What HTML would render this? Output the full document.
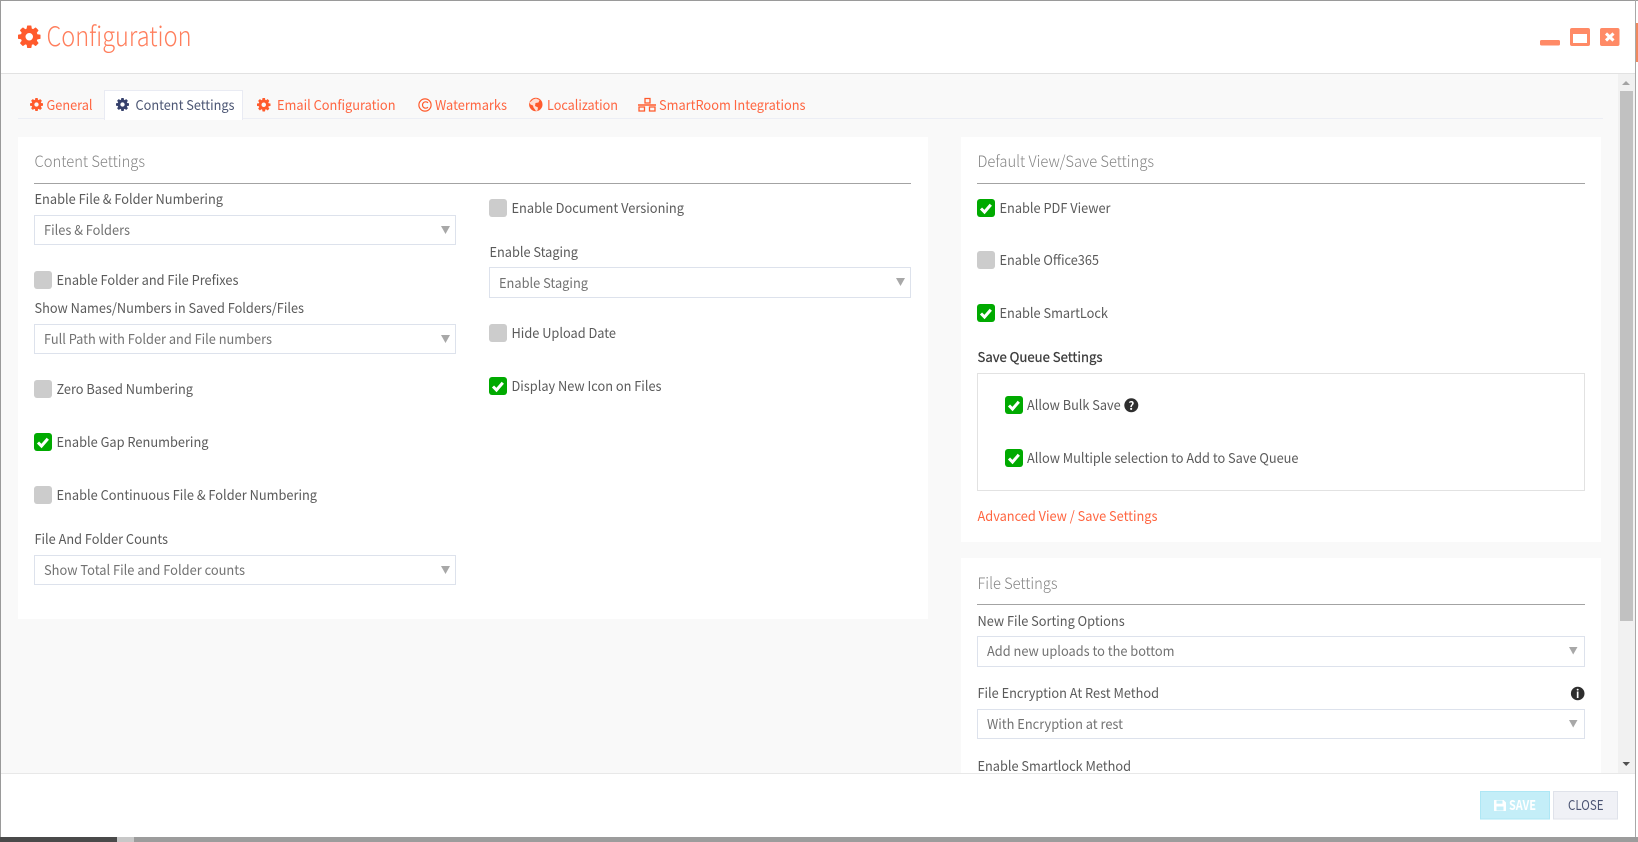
<!DOCTYPE html>
<html lang="en">
<head>
<meta charset="utf-8">
<title>Configuration</title>
<style>
html,body{margin:0;padding:0;background:#fff;width:1638px;height:842px;overflow:hidden}
svg{display:block}
text{font-family:"Noto Sans CJK SC","Liberation Sans",sans-serif;font-size:13.7px;fill:#5a5a5a}
.o{fill:#ff6540}
.t{font-size:13.7px}
.h{font-size:16px;fill:#858585;font-weight:300}
.s{fill:#727272}
.sel{fill:#fff;stroke:#dde2ec;stroke-width:1}
.arr{fill:#a8a8a8}
.on{fill:#00aa00}
.off{fill:#cccccc}
.ck{fill:none;stroke:#fff;stroke-width:3}
</style>
</head>
<body>
<svg width="1638" height="842" viewBox="0 0 1638 842" xmlns="http://www.w3.org/2000/svg">
<defs>
<symbol id="cog" viewBox="128 128 1536 1536"><path d="M1152 896q0-106-75-181t-181-75-181 75-75 181 75 181 181 75 181-75 75-181zm512-109v222q0 12-8 23t-20 13l-185 28q-19 54-39 91 35 50 107 138 10 12 10 25t-9 23q-27 37-99 108t-94 71q-12 0-26-9l-138-108q-44 23-91 38-16 136-29 186-7 28-36 28h-222q-14 0-24.5-8.5t-11.5-21.5l-28-184q-49-16-90-37l-141 107q-10 9-25 9-14 0-25-11-126-114-165-168-7-10-7-23 0-12 8-23 15-21 51-66.5t54-70.5q-27-50-41-99l-183-27q-13-2-21-12.5t-8-23.5v-222q0-12 8-23t19-13l186-28q14-46 39-92-40-57-107-138-10-12-10-24 0-10 9-23 26-36 98.5-107.5t94.5-71.5q13 0 26 10l138 107q44-23 91-38 16-136 29-186 7-28 36-28h222q14 0 24.5 8.5t11.5 21.5l28 184q49 16 90 37l142-107q9-9 24-9 13 0 25 10 129 119 165 170 7 8 7 22 0 12-8 23-15 21-51 66.5t-54 70.5q26 50 41 98l183 28q13 2 21 12.5t8 23.5z"/></symbol>
<g id="on"><rect x="0" y="0" width="18" height="18" rx="3" class="on"/><path d="M4 9.5L7.5 13L13.8 5.8" class="ck"/></g>
<g id="off"><rect x="0" y="0" width="18" height="18" rx="3" class="off"/></g>
</defs>

<!-- window -->
<rect x="0" y="0" width="1638" height="842" fill="#fff"/>
<rect x="1636" y="23" width="2" height="39" fill="#f0895f"/>
<rect x="1" y="74" width="1634" height="699" fill="#f9f9f9"/>
<rect x="1" y="73" width="1634" height="1" fill="#e2e2e2"/>
<rect x="1" y="773" width="1634" height="1" fill="#e8e8e8"/>
<rect x="1" y="774" width="1634" height="63" fill="#fff"/>
<rect x="0" y="0" width="1638" height="1" fill="#9a9a9a"/>
<rect x="0" y="0" width="1" height="837" fill="#9a9a9a"/>
<rect x="1635" y="0" width="1" height="837" fill="#a8a8a8"/>
<rect x="0" y="837" width="1638" height="5" fill="#9c9c9c"/>
<rect x="0" y="837" width="117" height="5" fill="#4a4a4a"/>
<rect x="117" y="837" width="17" height="5" fill="#c8c8c8"/>

<!-- title -->
<use href="#cog" x="18" y="25.5" width="22.5" height="22.5" fill="#ff5a2c"/>
<text x="46.5" y="46" style="font-size:27px;font-weight:300;fill:#ff7e5c" textLength="145" lengthAdjust="spacingAndGlyphs">Configuration</text>

<!-- window controls -->
<rect x="1540" y="40" width="20" height="5.5" rx="1.5" fill="#ff8a66"/>
<rect x="1570" y="28" width="20" height="18" rx="2" fill="#ff8a66"/>
<rect x="1573" y="34" width="14" height="9" fill="#fff"/>
<rect x="1600" y="28" width="19.5" height="18" rx="2" fill="#ff8a66"/>
<path d="M1606 33.5L1613.5 40.5M1613.5 33.5L1606 40.5" stroke="#fff" stroke-width="3" fill="none"/>

<!-- scrollbar -->
<rect x="1618" y="74" width="17" height="699" fill="#f1f1f1"/>
<rect x="1620" y="91" width="13" height="530" fill="#c1c1c1"/>
<polygon points="1626,81 1630,85 1622,85" fill="#a3a3a3"/>
<polygon points="1622.5,762 1630,762 1626.2,766" fill="#505050"/>

<!-- tabs -->
<rect x="18" y="118" width="1585" height="1" fill="#eceef5"/>
<rect x="104.5" y="90.5" width="138" height="29" fill="#fff" stroke="#e9ebf3" stroke-width="1"/>
<rect x="105" y="117" width="137" height="3" fill="#fff"/>

<use href="#cog" x="30" y="98" width="13" height="13" fill="#ff5a2c"/>
<text x="46.5" y="110" class="o" textLength="46" lengthAdjust="spacingAndGlyphs">General</text>
<use href="#cog" x="116" y="98" width="13" height="13" fill="#35406b"/>
<text x="135.5" y="110" style="fill:#4b5573" textLength="99" lengthAdjust="spacingAndGlyphs">Content Settings</text>
<use href="#cog" x="257" y="98" width="13.5" height="13.5" fill="#ff5a2c"/>
<text x="277" y="110" class="o" textLength="118.5" lengthAdjust="spacingAndGlyphs">Email Configuration</text>
<circle cx="425" cy="105" r="6.1" fill="none" stroke="#ff5a2c" stroke-width="1.2"/>
<path d="M428 102.8A3.2 3.2 0 1 0 428 107.2" fill="none" stroke="#ff5a2c" stroke-width="1.2"/>
<text x="435" y="110" class="o" textLength="72" lengthAdjust="spacingAndGlyphs">Watermarks</text>
<circle cx="535.8" cy="104.5" r="6.7" fill="#ff5a2c"/>
<path d="M533 99.5l3-1 3.5 1.5-1 2.5-3 .5-.5 3 3 1.5-.5 3-1.5.5-2.5-3.5-.5-2-2.5-1-1-2 2-1.5z" fill="#fff" opacity=".8"/>
<text x="547" y="110" class="o" textLength="71" lengthAdjust="spacingAndGlyphs">Localization</text>
<path d="M645 98.5h5v4.5h-5zM639 107h5.5v4h-5.5zM649.5 107h5.5v4h-5.5z" fill="none" stroke="#ff5a2c" stroke-width="1.3"/>
<path d="M638 105h18" stroke="#ff5a2c" stroke-width="1.4" fill="none"/>
<text x="659" y="110" class="o" textLength="146.5" lengthAdjust="spacingAndGlyphs">SmartRoom Integrations</text>

<!-- left panel -->
<rect x="18" y="137" width="910" height="482" fill="#fff"/>
<text x="34.5" y="167" class="h" textLength="110.5" lengthAdjust="spacingAndGlyphs">Content Settings</text>
<rect x="34" y="183" width="877" height="1" fill="#a3a3a3"/>

<text x="34.5" y="204" class="t" textLength="188.5" lengthAdjust="spacingAndGlyphs">Enable File &amp; Folder Numbering</text>
<rect x="34.5" y="215.5" width="421" height="29" class="sel"/>
<text x="44" y="235" class="s" textLength="86" lengthAdjust="spacingAndGlyphs">Files &amp; Folders</text>
<polygon points="441,226 450,226 445.5,234" class="arr"/>

<use href="#off" x="34" y="271"/>
<text x="56.5" y="285" class="t" textLength="182" lengthAdjust="spacingAndGlyphs">Enable Folder and File Prefixes</text>

<text x="34.5" y="313" class="t" textLength="269.5" lengthAdjust="spacingAndGlyphs">Show Names/Numbers in Saved Folders/Files</text>
<rect x="34.5" y="324.5" width="421" height="29" class="sel"/>
<text x="44" y="344" class="s" textLength="228" lengthAdjust="spacingAndGlyphs">Full Path with Folder and File numbers</text>
<polygon points="441,335 450,335 445.5,343" class="arr"/>

<use href="#off" x="34" y="380"/>
<text x="56.5" y="394" class="t" textLength="136.5" lengthAdjust="spacingAndGlyphs">Zero Based Numbering</text>

<use href="#on" x="34" y="433"/>
<text x="56.5" y="447" class="t" textLength="152" lengthAdjust="spacingAndGlyphs">Enable Gap Renumbering</text>

<use href="#off" x="34" y="486"/>
<text x="56.5" y="500" class="t" textLength="260.5" lengthAdjust="spacingAndGlyphs">Enable Continuous File &amp; Folder Numbering</text>

<text x="34.5" y="544" class="t" textLength="133.5" lengthAdjust="spacingAndGlyphs">File And Folder Counts</text>
<rect x="34.5" y="555.5" width="421" height="29" class="sel"/>
<text x="44" y="575" class="s" textLength="201" lengthAdjust="spacingAndGlyphs">Show Total File and Folder counts</text>
<polygon points="441,566 450,566 445.5,574" class="arr"/>

<!-- middle column -->
<use href="#off" x="489" y="199"/>
<text x="511.5" y="213" class="t" textLength="172.5" lengthAdjust="spacingAndGlyphs">Enable Document Versioning</text>
<text x="489.5" y="257" class="t" textLength="88.5" lengthAdjust="spacingAndGlyphs">Enable Staging</text>
<rect x="489.5" y="267.5" width="421" height="30" class="sel"/>
<text x="499" y="288" class="s" textLength="89" lengthAdjust="spacingAndGlyphs">Enable Staging</text>
<polygon points="896,278 905,278 900.5,286" class="arr"/>
<use href="#off" x="489" y="324"/>
<text x="511.5" y="338" class="t" textLength="104.5" lengthAdjust="spacingAndGlyphs">Hide Upload Date</text>
<use href="#on" x="489" y="377"/>
<text x="511.5" y="391" class="t" textLength="150" lengthAdjust="spacingAndGlyphs">Display New Icon on Files</text>

<!-- right panel 1 -->
<rect x="961" y="137" width="640" height="405" fill="#fff"/>
<text x="977.5" y="167" class="h" textLength="176.5" lengthAdjust="spacingAndGlyphs">Default View/Save Settings</text>
<rect x="977" y="183" width="608" height="1" fill="#a3a3a3"/>
<use href="#on" x="977" y="199"/>
<text x="999.5" y="213" class="t" textLength="111" lengthAdjust="spacingAndGlyphs">Enable PDF Viewer</text>
<use href="#off" x="977" y="251"/>
<text x="999.5" y="265" class="t" textLength="99.5" lengthAdjust="spacingAndGlyphs">Enable Office365</text>
<use href="#on" x="977" y="304"/>
<text x="999.5" y="318" class="t" textLength="108.5" lengthAdjust="spacingAndGlyphs">Enable SmartLock</text>
<text x="977.5" y="362" style="fill:#3a3a3a;stroke:#3a3a3a;stroke-width:.25" class="t" textLength="125" lengthAdjust="spacingAndGlyphs">Save Queue Settings</text>
<rect x="977.5" y="373.5" width="607" height="117" fill="#fff" stroke="#e2e2e2"/>
<use href="#on" x="1005" y="396"/>
<text x="1027" y="410" class="t" textLength="93.7" lengthAdjust="spacingAndGlyphs">Allow Bulk Save</text>
<circle cx="1131.3" cy="405.3" r="7" fill="#2e2e2e"/>
<text x="1131.3" y="410" text-anchor="middle" style="font-size:11.5px;font-weight:bold;fill:#fff">?</text>
<use href="#on" x="1005" y="449"/>
<text x="1027" y="463" class="t" textLength="271.5" lengthAdjust="spacingAndGlyphs">Allow Multiple selection to Add to Save Queue</text>
<text x="977.5" y="521" class="o" textLength="180" lengthAdjust="spacingAndGlyphs">Advanced View / Save Settings</text>

<!-- right panel 2 -->
<rect x="961" y="558" width="640" height="215" fill="#fff"/>
<text x="977.5" y="589" class="h" textLength="80" lengthAdjust="spacingAndGlyphs">File Settings</text>
<rect x="977" y="604" width="608" height="1" fill="#a3a3a3"/>
<text x="977.5" y="626" class="t" textLength="147.2" lengthAdjust="spacingAndGlyphs">New File Sorting Options</text>
<rect x="977.5" y="636.5" width="607" height="30" class="sel"/>
<text x="987" y="656" class="s" textLength="187.5" lengthAdjust="spacingAndGlyphs">Add new uploads to the bottom</text>
<polygon points="1569,647 1577.5,647 1573.2,654.5" class="arr"/>
<text x="977.5" y="698" class="t" textLength="181.5" lengthAdjust="spacingAndGlyphs">File Encryption At Rest Method</text>
<circle cx="1577.7" cy="693.5" r="6.8" fill="#2e2e2e"/>
<text x="1577.7" y="698" text-anchor="middle" style="font-size:11px;font-weight:bold;fill:#fff">i</text>
<rect x="977.5" y="709.5" width="607" height="29" class="sel"/>
<text x="987" y="729" class="s" textLength="136" lengthAdjust="spacingAndGlyphs">With Encryption at rest</text>
<polygon points="1569,720 1577.5,720 1573.2,727.5" class="arr"/>
<text x="977.5" y="771" class="t" textLength="153.5" lengthAdjust="spacingAndGlyphs">Enable Smartlock Method</text>
<rect x="961" y="773" width="640" height="1" fill="#e8e8e8"/>
<rect x="961" y="774" width="640" height="4" fill="#fff"/>

<!-- footer buttons -->
<rect x="1480.5" y="791.5" width="69" height="27.5" fill="#c4eef8" stroke="#aee7f5"/>
<path d="M1494 800.5a.5.5 0 0 1 .5-.5h9l2.5 2.5v8a.5.5 0 0 1-.5.5h-11a.5.5 0 0 1-.5-.5z" fill="#fff"/>
<rect x="1496.5" y="800.5" width="6" height="3.2" fill="#c4eef8"/>
<rect x="1496.5" y="806.5" width="7" height="4" fill="#c4eef8"/>
<text x="1509" y="810" style="fill:#fff;font-weight:bold" textLength="27" lengthAdjust="spacingAndGlyphs">SAVE</text>
<rect x="1553.5" y="791.5" width="64" height="27.5" fill="#f0f1f6" stroke="#dfe2ea"/>
<text x="1568" y="810" style="fill:#4c5574" textLength="35.5" lengthAdjust="spacingAndGlyphs">CLOSE</text>
</svg>
</body>
</html>
